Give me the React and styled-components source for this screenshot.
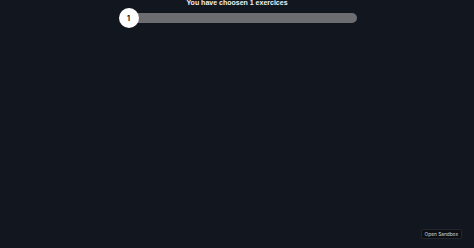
import React from 'react'
import styled, { createGlobalStyle } from 'styled-components'

const GlobalStyle = createGlobalStyle`
    html, body {
        margin: 0;
        padding: 0;
        background-color: #12171f;
        font-family: "Inter", "Liberation Sans", sans-serif;
    }
`

const Page = styled.div`
    position: relative;
    width: 474px;
    height: 248px;
    overflow: hidden;
    display: flex;
    flex-direction: column;
    align-items: center;
`

const Title = styled.h1`
    margin: -2px 0 0 0;
    font-family: "Liberation Sans", Arial, sans-serif;
    font-size: 7px;
    line-height: 10px;
    font-weight: 700;
    color: #f2f2f2;
`

const Slider = styled.div`
    position: relative;
    width: 236px;
    height: 20px;
    margin: 0 0 0 3px;
    display: flex;
    align-items: center;
`

const Track = styled.div`
    flex: 1;
    height: 10px;
    border-radius: 5px;
    background-color: #6d6d71;
`

const Thumb = styled.div`
    position: absolute;
    left: ${p => p.offset}px;
    top: 0;
    width: 20px;
    height: 20px;
    border-radius: 50%;
    background-color: #ffffff;
    display: flex;
    align-items: center;
    justify-content: center;
    font-size: 7px;
    font-weight: 700;
    color: #111;
`

const SandboxButton = styled.button`
    position: absolute;
    right: 12px;
    bottom: 9px;
    height: 10px;
    padding: 0 3px;
    border: 1px solid #23272d;
    border-radius: 2px;
    background-color: #0c0e11;
    color: #d8d8d8;
    font-family: "Inter", "Liberation Sans", sans-serif;
    font-size: 4.8px;
    line-height: 8px;
`

export default function App() {
    const count = 1

    return (
        <>
            <GlobalStyle />
            <Page>
                <Title>You have choosen {count} exercices</Title>
                <Slider>
                    <Track />
                    <Thumb offset={-2}>{count}</Thumb>
                </Slider>
                <SandboxButton>Open Sandbox</SandboxButton>
            </Page>
        </>
    )
}
